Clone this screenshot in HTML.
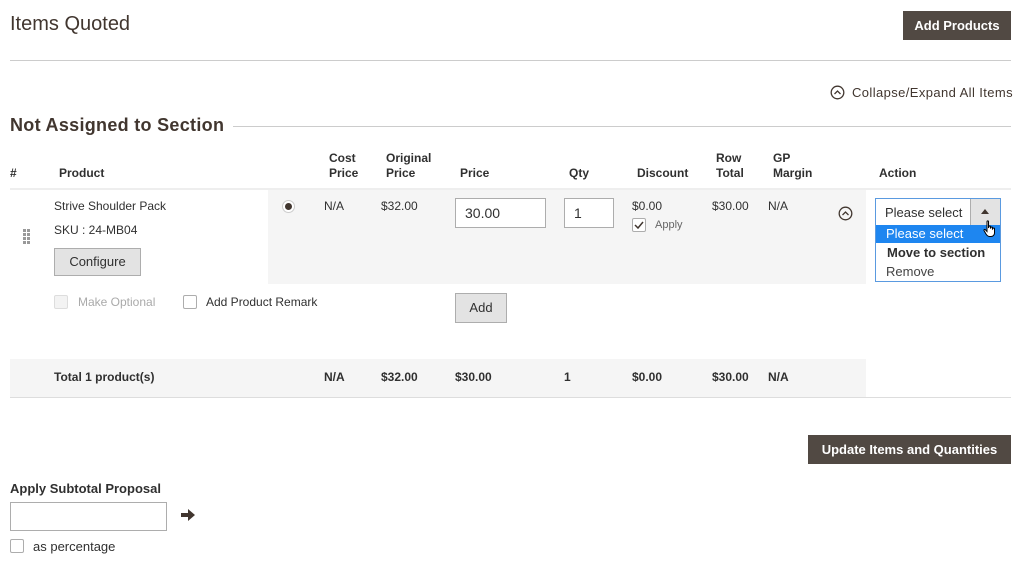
<!DOCTYPE html>
<html><head><meta charset="utf-8"><style>
*{margin:0;padding:0;box-sizing:border-box}
body{width:1024px;height:569px;background:#fff;font-family:"Liberation Sans",sans-serif;color:#303030;position:relative;overflow:hidden;font-size:12px}
.a{position:absolute;white-space:nowrap}
.b{font-weight:bold;color:#303030}
.btn{position:absolute;background:#514943;color:#fff;font-weight:bold;font-size:13px;text-align:center}
.gbtn{position:absolute;background:#e3e3e3;border:1px solid #adadad;color:#303030;font-size:13px;text-align:center}
.inp{position:absolute;border:1px solid #adadad;background:#fff;font-size:14px;padding-left:9px}
.cb{position:absolute;width:14px;height:14px;border:1px solid #adadad;background:#fff;border-radius:2px}
</style></head><body>
<div class="a" style="left:10px;top:13px;font-size:20px;color:#41362f">Items Quoted</div>
<div class="btn" style="left:903px;top:11px;width:108px;height:29px;line-height:29px">Add Products</div>
<div class="a" style="left:10px;top:60px;width:1001px;height:1px;background:#ccc"></div>
<svg class="a" style="left:830px;top:85px" width="15" height="15" viewBox="0 0 15 15"><circle cx="7.5" cy="7.5" r="6.3" fill="none" stroke="#41362f" stroke-width="1.3"/><path d="M4.5 9L7.5 6L10.5 9" fill="none" stroke="#41362f" stroke-width="1.3"/></svg>
<div class="a" style="left:852px;top:85px;font-size:13px;color:#41362f;letter-spacing:0.4px">Collapse/Expand All Items</div>
<div class="a" style="left:10px;top:115px;font-size:18px;font-weight:bold;color:#41362f;letter-spacing:0.3px">Not Assigned to Section</div>
<div class="a" style="left:233px;top:126px;width:778px;height:1px;background:#ccc"></div>
<div class="a b" style="left:10px;top:166px">#</div>
<div class="a b" style="left:59px;top:166px">Product</div>
<div class="a b" style="left:329px;top:151px;line-height:15px">Cost<br>Price</div>
<div class="a b" style="left:386px;top:151px;line-height:15px">Original<br>Price</div>
<div class="a b" style="left:460px;top:166px">Price</div>
<div class="a b" style="left:569px;top:166px">Qty</div>
<div class="a b" style="left:637px;top:166px">Discount</div>
<div class="a b" style="left:716px;top:151px;line-height:15px">Row<br>Total</div>
<div class="a b" style="left:773px;top:151px;line-height:15px">GP<br>Margin</div>
<div class="a b" style="left:879px;top:166px">Action</div>
<div class="a" style="left:10px;top:188px;width:1001px;height:2px;background:#eee"></div>
<div class="a" style="left:268px;top:190px;width:598px;height:94px;background:#f5f5f5"></div>
<svg class="a" style="left:23px;top:229px" width="10" height="16"><g fill="#999"><rect x="0" y="0" width="3" height="3"/><rect x="4" y="0" width="3" height="3"/><rect x="0" y="4" width="3" height="3"/><rect x="4" y="4" width="3" height="3"/><rect x="0" y="8" width="3" height="3"/><rect x="4" y="8" width="3" height="3"/><rect x="0" y="12" width="3" height="3"/><rect x="4" y="12" width="3" height="3"/></g></svg>
<div class="a" style="left:54px;top:199px">Strive Shoulder Pack</div>
<div class="a" style="left:54px;top:223px">SKU : 24-MB04</div>
<div class="gbtn" style="left:54px;top:248px;width:87px;height:28px;line-height:26px">Configure</div>
<div class="a" style="left:282px;top:200px;width:13px;height:13px;border-radius:50%;border:1px solid #ccc;background:#fff"></div>
<div class="a" style="left:285px;top:203px;width:7px;height:7px;border-radius:50%;background:#41362f"></div>
<div class="a" style="left:324px;top:199px">N/A</div>
<div class="a" style="left:381px;top:199px">$32.00</div>
<div class="inp" style="left:455px;top:198px;width:91px;height:30px;line-height:28px">30.00</div>
<div class="inp" style="left:564px;top:198px;width:50px;height:30px;line-height:28px">1</div>
<div class="a" style="left:632px;top:199px">$0.00</div>
<div class="cb" style="left:632px;top:218px"></div>
<svg class="a" style="left:634px;top:221px" width="10" height="8"><path d="M1 4L4 7L9 1" fill="none" stroke="#41362f" stroke-width="1.5"/></svg>
<div class="a" style="left:655px;top:219px;font-size:11px;color:#666">Apply</div>
<div class="a" style="left:712px;top:199px">$30.00</div>
<div class="a" style="left:768px;top:199px">N/A</div>
<svg class="a" style="left:838px;top:206px" width="15" height="15" viewBox="0 0 15 15"><circle cx="7.5" cy="7.5" r="6.3" fill="none" stroke="#41362f" stroke-width="1.3"/><path d="M4.5 9L7.5 6L10.5 9" fill="none" stroke="#41362f" stroke-width="1.3"/></svg>
<div class="a" style="left:875px;top:198px;width:126px;height:84px;border:1px solid #5a9ae0;background:#fff"></div>
<div class="a" style="left:885px;top:205px;font-size:13px">Please select</div>
<div class="a" style="left:970px;top:199px;width:30px;height:26px;background:#e3e3e3;border-left:1px solid #adadad"></div>
<div class="a" style="left:981px;top:209px;width:0;height:0;border-left:4px solid transparent;border-right:4px solid transparent;border-bottom:5px solid #41362f"></div>
<div class="a" style="left:876px;top:225px;width:124px;height:18px;background:#1e86f0;color:#fff;font-size:13px;padding-left:10px;line-height:18px">Please select</div>
<div class="a" style="left:887px;top:245px;font-size:13px;font-weight:bold">Move to section</div>
<div class="a" style="left:886px;top:264px;font-size:13px;color:#444">Remove</div>
<svg class="a" style="left:983px;top:220px" width="14" height="18" viewBox="0 0 14 18"><path d="M4 1.5C4 0.7 5.5 0.7 5.5 1.5V8L6 6.5C6 5.8 7.5 5.8 7.5 6.5V8.5L8 7.5C8 6.8 9.5 6.8 9.5 7.5V9L10 8.5C10 7.8 11.5 7.8 11.5 8.5V13C11.5 15 10 16.5 8 16.5H6.5C5 16.5 4 15.5 3 14L1 10.5C0.6 9.7 1.6 9 2.3 9.7L4 11.5Z" fill="#fff" stroke="#000" stroke-width="1"/></svg>
<div class="cb" style="left:54px;top:295px;background:#f3f3f3;border-color:#ddd"></div>
<div class="a" style="left:78px;top:295px;color:#aaa">Make Optional</div>
<div class="cb" style="left:183px;top:295px"></div>
<div class="a" style="left:206px;top:295px">Add Product Remark</div>
<div class="gbtn" style="left:455px;top:293px;width:52px;height:30px;line-height:28px">Add</div>
<div class="a" style="left:10px;top:359px;width:856px;height:38px;background:#f5f5f5"></div>
<div class="a" style="left:10px;top:397px;width:1001px;height:1px;background:#ddd"></div>
<div class="a b" style="left:54px;top:370px">Total 1 product(s)</div>
<div class="a b" style="left:324px;top:370px">N/A</div>
<div class="a b" style="left:381px;top:370px">$32.00</div>
<div class="a b" style="left:455px;top:370px">$30.00</div>
<div class="a b" style="left:564px;top:370px">1</div>
<div class="a b" style="left:632px;top:370px">$0.00</div>
<div class="a b" style="left:712px;top:370px">$30.00</div>
<div class="a b" style="left:768px;top:370px">N/A</div>
<div class="btn" style="left:808px;top:435px;width:203px;height:29px;line-height:29px">Update Items and Quantities</div>
<div class="a b" style="left:10px;top:481px;font-size:13px">Apply Subtotal Proposal</div>
<div class="inp" style="left:10px;top:502px;width:157px;height:29px"></div>
<svg class="a" style="left:181px;top:509px" width="14" height="12" viewBox="0 0 14 12"><path d="M0 4H7V0L14 6L7 12V8H0Z" fill="#41362f"/></svg>
<div class="cb" style="left:10px;top:539px"></div>
<div class="a" style="left:33px;top:539px;font-size:13px">as percentage</div>
</body></html>
